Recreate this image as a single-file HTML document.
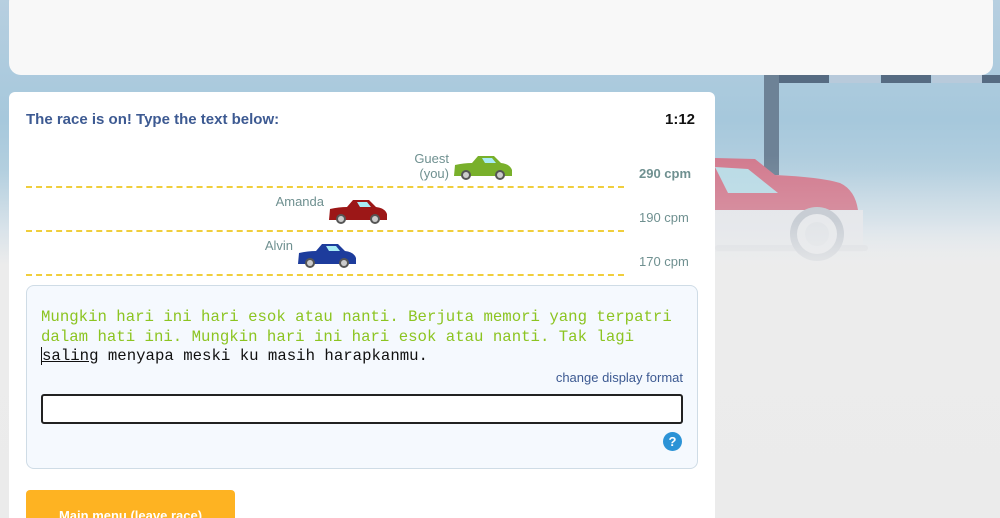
<!DOCTYPE html>
<html style="height:518px;overflow:hidden"><head><meta charset="utf-8"><style>
html,body{margin:0;width:1000px;height:518px;overflow:hidden}
body{position:relative;font-family:"Liberation Sans",sans-serif;
background:linear-gradient(180deg,#b7cfe0 0px,#a6c8dc 120px,#b3cfdf 170px,#d9e3ea 230px,#ececec 265px,#ebebeb 518px);}
.top{position:absolute;left:9px;top:-10px;width:984px;height:85px;background:#f8f8f8;border-radius:12px;}
.card{position:absolute;left:9px;top:92px;width:706px;height:440px;background:#fff;border-radius:6px;}
.t{position:absolute;color:#3d5a92;font-weight:bold;font-size:15px}
.lab{position:absolute;color:#6f9090;font-size:13px;text-align:right;line-height:15px}
.cpm{position:absolute;color:#6f9090;font-size:13px;left:630px}
.dash{position:absolute;left:17px;width:598px;border-top:2px dashed #f0ce3c}
.box{position:absolute;left:17px;top:193px;width:670px;height:182px;background:#f5f9fe;border:1px solid #cfdce6;border-radius:8px}
.txt{position:absolute;left:14px;top:22px;font-family:"Liberation Mono",monospace;font-size:15.7px;line-height:19.5px;color:#8cc421;white-space:pre}
.inp{position:absolute;left:14px;top:108px;width:638px;height:26px;border:2px solid #222;border-radius:3px;background:#fff}
.btn{position:absolute;left:17px;top:398px;width:209px;height:40px;background:#feb322;border-radius:4px;color:#fff;font-weight:bold;font-size:13px;text-align:center;line-height:52px}
</style></head><body>
<svg style="position:absolute;left:700px;top:75px" width="300" height="200">
<defs><linearGradient id="f" x1="0" y1="0" x2="0" y2="1"><stop offset="0" stop-color="#ecedef" stop-opacity="0"/><stop offset=".55" stop-color="#eceef0" stop-opacity=".2"/><stop offset="1" stop-color="#ececec" stop-opacity=".95"/></linearGradient></defs>
<rect x="64" y="0" width="15" height="100" fill="#6d8296"/>
<rect x="79" y="0" width="50" height="8" fill="#566b82"/><rect x="130" y="0" width="50" height="8" fill="#b8cadb"/><rect x="181" y="0" width="50" height="8" fill="#566b82"/><rect x="232" y="0" width="50" height="8" fill="#b8cadb"/><rect x="282" y="0" width="20" height="8" fill="#566b82"/>
<path d="M15 83 L55 84 L75 100 Q120 102 140 108 Q155 115 158 135 L162 176 L15 176Z" fill="#d27a8e"/>
<path d="M15 92 L48 94 L78 118 L28 118Z" fill="#b9dbe6"/>
<rect x="15" y="135" width="148" height="42" fill="#e4e6ea"/>
<rect x="15" y="170" width="153" height="6" rx="3" fill="#d8dbe0"/>
<circle cx="117" cy="159" r="27" fill="#c0c6ce"/><circle cx="117" cy="159" r="20" fill="#e6e8eb"/><circle cx="117" cy="159" r="12" fill="#dfe2e6"/>
<rect x="0" y="80" width="300" height="120" fill="url(#f)"/>
</svg>
<div class="top"></div>
<div class="card">
<div class="t" style="left:17px;top:19px">The race is on! Type the text below:</div>
<div class="t" style="left:656px;top:19px;color:#111">1:12</div>
<div class="lab" style="left:380px;top:59px;width:60px">Guest<br>(you)</div>
<div class="lab" style="left:250px;top:102px;width:65px">Amanda</div>
<div class="lab" style="left:230px;top:146px;width:54px">Alvin</div>
<svg style="position:absolute;left:443px;top:62px" width="62" height="28"><path d="M2 22 L3 11 Q12 9 20 9 L26 2 L42 2 L49 9 Q58 10 60 16 L60 22Z" fill="#79b02b"/><path d="M30 4 L40 4 L44 9 L33 9Z" fill="#a8ecf5"/><circle cx="14" cy="21" r="5" fill="#555"/><circle cx="14" cy="21" r="3" fill="#ccc"/><circle cx="48" cy="21" r="5" fill="#555"/><circle cx="48" cy="21" r="3" fill="#ccc"/></svg>
<svg style="position:absolute;left:318px;top:106px" width="62" height="28"><path d="M2 22 L3 11 Q12 9 20 9 L26 2 L42 2 L49 9 Q58 10 60 16 L60 22Z" fill="#9c1717"/><path d="M30 4 L40 4 L44 9 L33 9Z" fill="#a8ecf5"/><circle cx="14" cy="21" r="5" fill="#555"/><circle cx="14" cy="21" r="3" fill="#ccc"/><circle cx="48" cy="21" r="5" fill="#555"/><circle cx="48" cy="21" r="3" fill="#ccc"/></svg>
<svg style="position:absolute;left:287px;top:150px" width="62" height="28"><path d="M2 22 L3 11 Q12 9 20 9 L26 2 L42 2 L49 9 Q58 10 60 16 L60 22Z" fill="#1d3c9c"/><path d="M30 4 L40 4 L44 9 L33 9Z" fill="#a8ecf5"/><circle cx="14" cy="21" r="5" fill="#555"/><circle cx="14" cy="21" r="3" fill="#ccc"/><circle cx="48" cy="21" r="5" fill="#555"/><circle cx="48" cy="21" r="3" fill="#ccc"/></svg>
<div class="cpm" style="top:74px;font-weight:bold">290 cpm</div>
<div class="cpm" style="top:118px">190 cpm</div>
<div class="cpm" style="top:162px">170 cpm</div>
<div class="dash" style="top:94px"></div>
<div class="dash" style="top:138px"></div>
<div class="dash" style="top:182px"></div>
<div class="box">
<div class="txt">Mungkin hari ini hari esok atau nanti. Berjuta memori yang terpatri
dalam hati ini. Mungkin hari ini hari esok atau nanti. Tak lagi
<span style="color:#111"><span style="text-decoration:underline;border-left:1px solid #111">saling</span> menyapa meski ku masih harapkanmu.</span></div>
<div style="position:absolute;right:14px;top:84px;color:#3d5a92;font-size:13px">change display format</div>
<div class="inp"></div>
<div style="position:absolute;left:636px;top:146px;width:19px;height:19px;border-radius:50%;background:#2c93d6;color:#fff;font-size:13px;font-weight:bold;text-align:center;line-height:19px">?</div>
</div>
<div class="btn">Main menu (leave race)</div>
</div>
</body></html>
